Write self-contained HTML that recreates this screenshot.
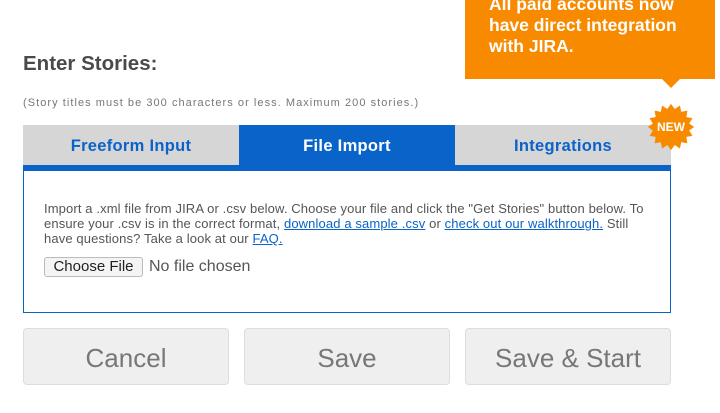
<!DOCTYPE html>
<html><head><meta charset="utf-8"><style>
*{margin:0;padding:0;box-sizing:border-box}
body{width:720px;height:413px;background:#fff;position:relative;overflow:hidden;font-family:"Liberation Sans",sans-serif}
.abs{position:absolute}
h1{position:absolute;left:23px;top:52px;font-size:20.5px;font-weight:bold;color:#4a4a4a}
.note{left:23px;top:97px;font-size:11px;letter-spacing:1.05px;color:#777}
.tab{top:125px;height:40px;font-weight:bold;font-size:16.5px;letter-spacing:0.3px;color:#0a63c9;background:#d6d6d6;text-align:center;line-height:42px}
.box{left:23px;top:165px;width:648px;height:148px;border:1px solid #0a63c9;border-top:6px solid #0a63c9}
.txt{left:44px;top:201px;width:612px;font-size:13px;letter-spacing:0.12px;line-height:15px;color:#555}
.txt a{color:#0a63c9;text-decoration:underline}
.cf{left:44px;top:257px;width:99px;height:20px;border:1px solid #bbb;border-radius:3px;background:#f4f4f4;font-size:15px;color:#222;text-align:center;line-height:18px}
.nf{left:149px;top:257px;font-size:16px;color:#555;line-height:20px}
.btn{top:328px;height:57px;width:206px;background:#efefef;border:1px solid #ddd;border-radius:4px;font-size:26px;color:#777;text-align:center;line-height:58px}
.or{left:465px;top:0;width:250px;height:79px;background:#f88a00;color:#fff;font-weight:bold;font-size:17.5px;line-height:21px;padding-left:24px}
</style></head><body>
<h1>Enter Stories:</h1>
<div class="abs note">(Story titles must be 300 characters or less. Maximum 200 stories.)</div>
<div class="abs tab" style="left:23px;width:216px">Freeform Input</div>
<div class="abs tab" style="left:239px;width:216px;background:#0a63c9;color:#fff">File Import</div>
<div class="abs tab" style="left:455px;width:216px">Integrations</div>
<div class="abs box"></div>
<div class="abs txt">Import a .xml file from JIRA or .csv below. Choose your file and click the "Get Stories" button below. To ensure your .csv is in the correct format, <a>download a sample .csv</a> or <a>check out our walkthrough.</a> Still have questions? Take a look at our <a>FAQ.</a></div>
<div class="abs cf">Choose File</div>
<div class="abs nf">No file chosen</div>
<div class="abs btn" style="left:23px">Cancel</div>
<div class="abs btn" style="left:244px">Save</div>
<div class="abs btn" style="left:465px">Save &amp; Start</div>
<div class="abs or"><div style="margin-top:-6px">All paid accounts now<br>have direct integration<br>with JIRA.</div></div>
<svg class="abs" style="left:0;top:0" width="720" height="413">
<polygon points="662,79 680,79 671,88" fill="#f88a00"/>
<g transform="translate(671,127) scale(1.22) translate(-671,-126)">
<polygon fill="#f88a00" points="690.0,126.0 685.9,128.9 688.6,133.3 683.6,134.1 684.4,139.4 679.4,138.4 678.3,143.6 674.1,140.8 671.0,145.0 667.9,140.8 663.7,143.6 662.6,138.4 657.6,139.4 658.4,134.1 653.4,133.3 656.1,128.9 652.0,126.0 656.1,123.1 653.4,118.7 658.4,117.9 657.6,112.6 662.6,113.6 663.7,108.4 667.9,111.2 671.0,107.0 674.1,111.2 678.3,108.4 679.4,113.6 684.4,112.6 683.6,117.9 688.6,118.7 685.9,123.1"/>
</g>
<text x="671" y="131" text-anchor="middle" font-family="Liberation Sans" font-weight="bold" font-size="12" fill="#fff">NEW</text>
</svg>
</body></html>
